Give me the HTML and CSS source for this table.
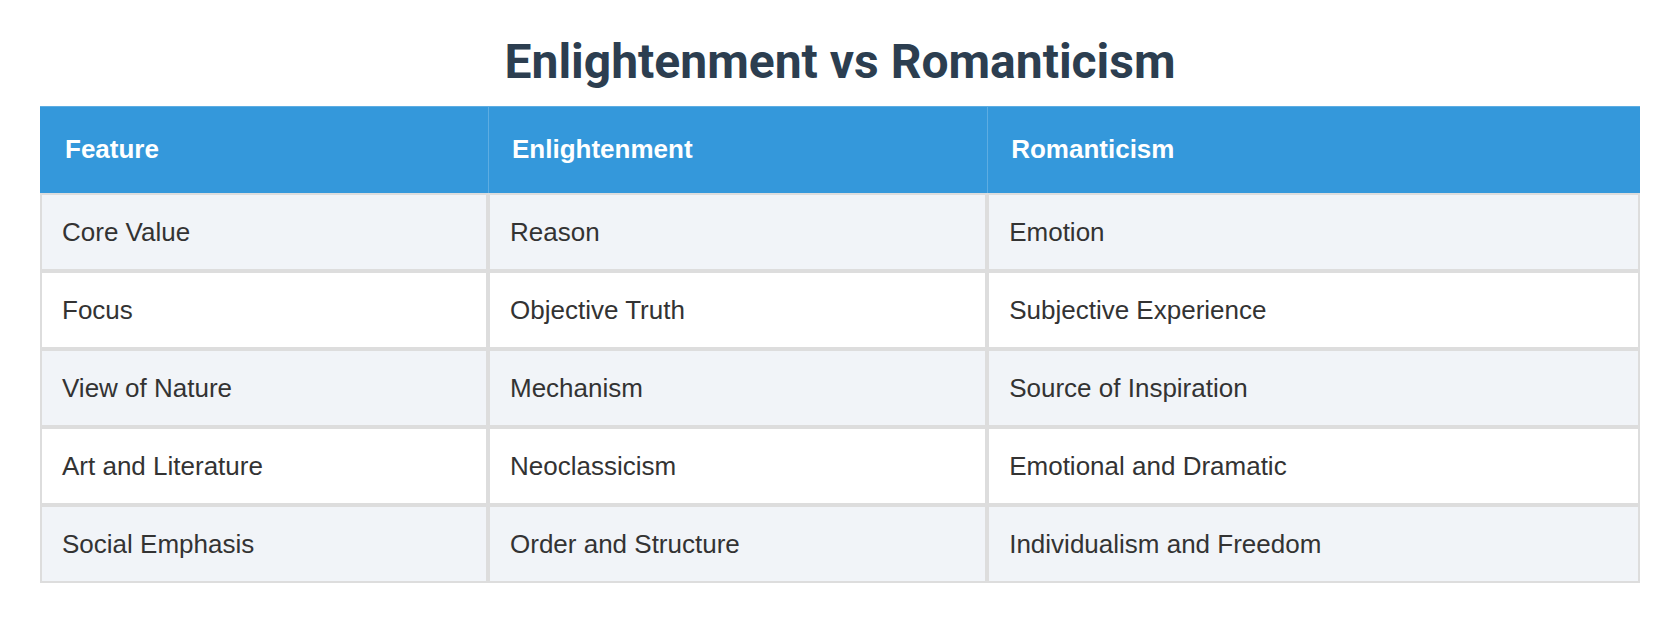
FILE: index.html
```html
<!DOCTYPE html>
<html lang="en">
<head>
<meta charset="utf-8">
<title>Enlightenment vs Romanticism</title>
<link rel="stylesheet" href="styles.css">
</head>
<body>
<main class="page">
  <h1 class="title">Enlightenment vs Romanticism</h1>
  <table class="compare">
    <colgroup>
      <col class="col-feature">
      <col class="col-enl">
      <col class="col-rom">
    </colgroup>
    <thead>
      <tr>
        <th>Feature</th>
        <th>Enlightenment</th>
        <th>Romanticism</th>
      </tr>
    </thead>
    <tbody>
      <tr><td>Core Value</td><td>Reason</td><td>Emotion</td></tr>
      <tr><td>Focus</td><td>Objective Truth</td><td>Subjective Experience</td></tr>
      <tr><td>View of Nature</td><td>Mechanism</td><td>Source of Inspiration</td></tr>
      <tr><td>Art and Literature</td><td>Neoclassicism</td><td>Emotional and Dramatic</td></tr>
      <tr><td>Social Emphasis</td><td>Order and Structure</td><td>Individualism and Freedom</td></tr>
    </tbody>
  </table>
</main>
</body>
</html>
```
FILE: styles.css
```css
html, body {
  margin: 0;
  padding: 0;
  background: #ffffff;
}

.page {
  padding: 0 40px;
  font-family: "Liberation Sans", Arial, sans-serif;
  color: #333333;
}

.title {
  font-family: Roboto, "Liberation Sans", sans-serif;
  font-weight: 700;
  font-size: 48px;
  line-height: 56px;
  color: #2c3e50;
  text-align: center;
  margin: 34px 0 16px;
}

.compare {
  width: 100%;
  border-collapse: separate;
  border-spacing: 0;
  table-layout: fixed;
  font-size: 26px;
}

.col-feature { width: 28%; }
.col-enl { width: 31.2%; }
.col-rom { width: 40.8%; }

.compare th {
  background: #3498db;
  color: #ffffff;
  font-weight: 700;
  text-align: left;
  line-height: 30px;
  padding: 27px 22px 29px 25px;
  border-top: 1px solid #5dade2;
}

.compare th + th {
  padding-left: 23px;
  border-left: 1px solid #5dade2;
}

.compare td {
  text-align: left;
  line-height: 30px;
  padding: 22px 20px;
  border: 2px solid #dddddd;
}

.compare tbody tr:nth-child(odd) td {
  background: #f1f4f8;
}

.compare tbody tr:nth-child(even) td {
  background: #ffffff;
}
```
